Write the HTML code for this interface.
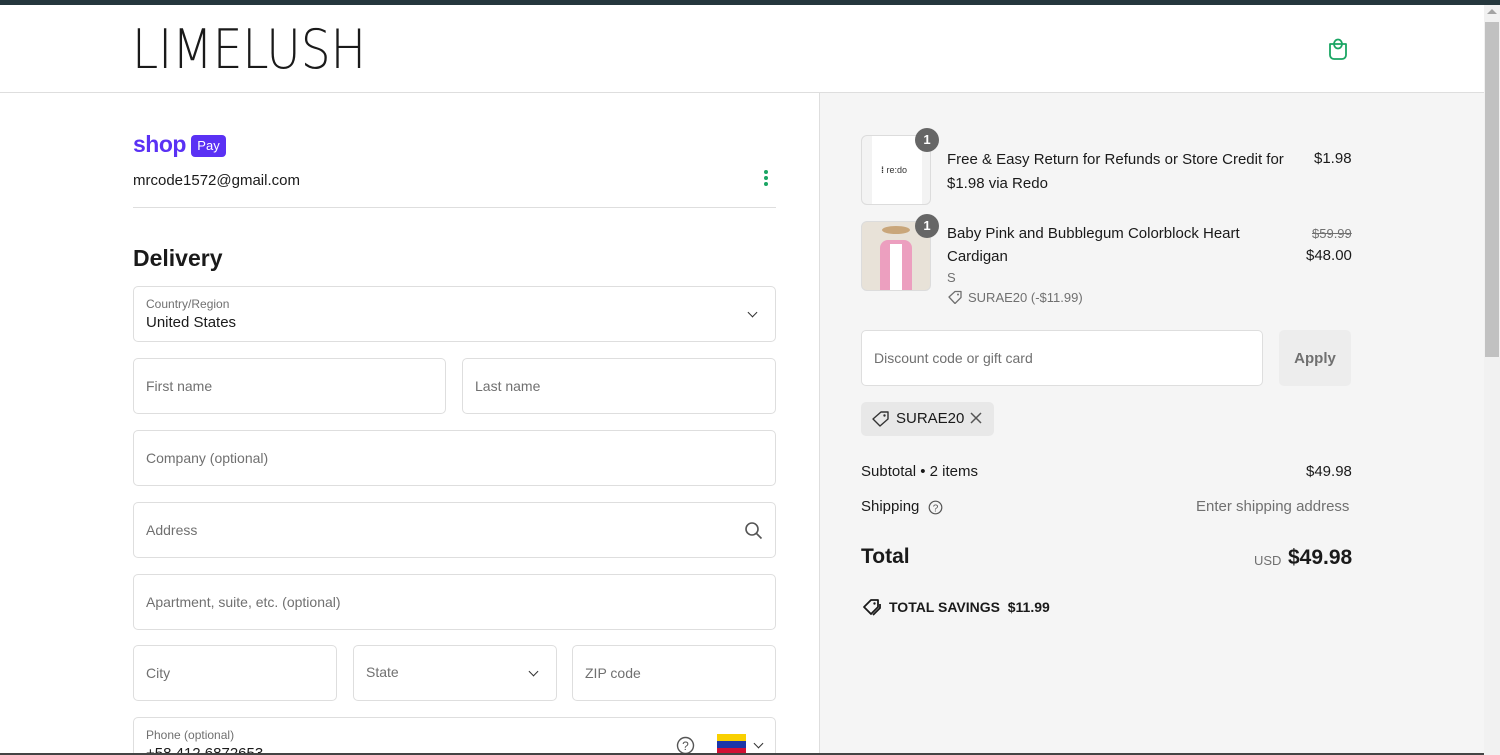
<!DOCTYPE html>
<html style="overflow:hidden;height:755px"><head><style>
*{box-sizing:border-box;margin:0;padding:0}
body{width:1500px;height:755px;overflow:hidden;background:#fff;font-family:"Liberation Sans",sans-serif;color:#1a1a1a;position:relative;font-size:14px}
.a{position:absolute}
.topbar{left:0;top:0;width:1500px;height:5px;background:#25373d}
.hdr{left:0;top:5px;width:1484px;height:88px;border-bottom:1px solid #dedede;background:#fff}
.right{left:819px;top:93px;width:665px;height:662px;background:#f5f5f5;border-left:1px solid #dedede}
.sb{left:1484px;top:5px;width:16px;height:750px;background:#f1f1f1}
.thumb{left:1485px;top:22px;width:14px;height:335px;background:#c1c1c1}
.field{position:absolute;border:1px solid #dedede;border-radius:5px;background:#fff;height:56px}
.ph{position:absolute;left:12px;top:19px;color:#707070;font-size:14px}
.lbl{position:absolute;left:12px;top:10px;font-size:12px;color:#707070}
.val{position:absolute;left:12px;top:27px;font-size:15px;color:#1a1a1a}
.chev{position:absolute;width:7px;height:7px;border-right:1.5px solid #333;border-bottom:1.5px solid #333;transform:rotate(45deg)}
.thumbimg{position:absolute;width:70px;height:70px;border:1px solid #dcdcdc;border-radius:6px;background:#fff;overflow:hidden}
.badge{position:absolute;width:24px;height:24px;border-radius:12px;background:#666;color:#fff;font-size:13px;font-weight:bold;text-align:center;line-height:24px}
</style></head><body>
<div class="a topbar"></div>
<div class="a hdr"></div>
<svg class="a" style="left:131px;top:26px" width="240" height="46" viewBox="0 0 240 46"><text x="1" y="42" font-size="54" textLength="234" lengthAdjust="spacingAndGlyphs" font-family="DejaVu Sans" font-weight="200" fill="#1a1a1a">LIMELUSH</text></svg>
<svg class="a" style="left:1327px;top:36px" width="22" height="25" viewBox="0 0 22 25"><path d="M3 8h16v11a4 4 0 0 1-4 4H7a4 4 0 0 1-4-4z" fill="none" stroke="#1aa563" stroke-width="1.8" stroke-linejoin="round"/><ellipse cx="11" cy="8" rx="4" ry="4.5" fill="none" stroke="#1aa563" stroke-width="1.8"/></svg>
<div class="a right"></div>
<div class="a sb"></div><div class="a thumb"></div>
<div class="a" style="left:1487px;top:9px;width:0;height:0;border-left:5px solid transparent;border-right:5px solid transparent;border-bottom:5px solid #a3a3a3"></div>

<div class="a" style="left:133px;top:131px;font-size:23px;font-weight:bold;color:#5a31f4;letter-spacing:-0.5px">shop</div>
<div class="a" style="left:191px;top:135px;width:35px;height:22px;background:#5a31f4;border-radius:4px;color:#fff;font-size:13px;text-align:center;line-height:22px">Pay</div>
<div class="a" style="left:133px;top:172px;font-size:15px">mrcode1572@gmail.com</div>
<div class="a" style="left:764px;top:170px;width:4px;height:4px;border-radius:2px;background:#1aa563;box-shadow:0 6px 0 #1aa563,0 12px 0 #1aa563"></div>
<div class="a" style="left:133px;top:207px;width:643px;height:1px;background:#dedede"></div>
<div class="a" style="left:133px;top:245px;font-size:23px;font-weight:bold">Delivery</div>

<div class="field" style="left:133px;top:286px;width:643px"><div class="lbl">Country/Region</div><div class="val">United States</div><div class="chev" style="left:615px;top:22px"></div></div>
<div class="field" style="left:133px;top:358px;width:313px"><div class="ph">First name</div></div>
<div class="field" style="left:462px;top:358px;width:314px"><div class="ph">Last name</div></div>
<div class="field" style="left:133px;top:430px;width:643px"><div class="ph">Company (optional)</div></div>
<div class="field" style="left:133px;top:502px;width:643px"><div class="ph">Address</div>
<svg style="position:absolute;left:610px;top:18px" width="20" height="20" viewBox="0 0 20 20"><circle cx="8" cy="8" r="6" fill="none" stroke="#555" stroke-width="1.6"/><path d="M12.5 12.5l5 5" stroke="#555" stroke-width="1.6"/></svg></div>
<div class="field" style="left:133px;top:574px;width:643px"><div class="ph">Apartment, suite, etc. (optional)</div></div>
<div class="field" style="left:133px;top:645px;width:204px"><div class="ph">City</div></div>
<div class="field" style="left:353px;top:645px;width:204px"><div class="ph" style="top:18px">State</div><div class="chev" style="left:176px;top:22px"></div></div>
<div class="field" style="left:572px;top:645px;width:204px"><div class="ph">ZIP code</div></div>
<div class="field" style="left:133px;top:717px;width:643px;height:60px"><div class="lbl">Phone (optional)</div><div class="val">+58 412 6872653</div>
<svg style="position:absolute;left:542px;top:18px" width="19" height="19" viewBox="0 0 19 19"><circle cx="9.5" cy="9.5" r="8" fill="none" stroke="#555" stroke-width="1.4"/><text x="9.5" y="14" font-size="12" text-anchor="middle" fill="#555" font-family="Liberation Sans">?</text></svg>
<div style="position:absolute;left:583px;top:16px;width:29px;height:22px"><div style="height:7px;background:#f9d000"></div><div style="height:7px;background:#1c36a8"></div><div style="height:8px;background:#d21034"></div></div>
<div class="chev" style="left:621px;top:22px"></div></div>
<div class="a" style="left:0;top:753px;width:1484px;height:2px;background:#444"></div>

<div class="thumbimg" style="left:861px;top:135px;background:#f3f3f3"><div style="position:absolute;left:10px;top:0;width:50px;height:70px;background:#fff"></div><div style="position:absolute;left:19px;top:29px;font-size:9px;color:#333"><b>⁞</b> re:do</div></div>
<div class="badge" style="left:915px;top:128px">1</div>
<div class="a" style="left:947px;top:148px;font-size:15px;line-height:24px;width:350px">Free &amp; Easy Return for Refunds or Store Credit for $1.98 via Redo</div>
<div class="a" style="left:1314px;top:150px;font-size:15px;line-height:18px">$1.98</div>

<div class="thumbimg" style="left:861px;top:221px;background:#e8e2d8"><div style="position:absolute;left:18px;top:18px;width:32px;height:52px;background:#ec9fbf;border-radius:8px 8px 0 0"></div><div style="position:absolute;left:28px;top:22px;width:12px;height:48px;background:#fff"></div><div style="position:absolute;left:20px;top:4px;width:28px;height:8px;background:#c9a67a;border-radius:50%"></div></div>
<div class="badge" style="left:915px;top:214px">1</div>
<div class="a" style="left:947px;top:222px;font-size:15px;line-height:23px;width:320px">Baby Pink and Bubblegum Colorblock Heart Cardigan</div>
<div class="a" style="left:947px;top:270px;font-size:13px;color:#707070">S</div>
<svg class="a" style="left:947px;top:290px" width="16" height="14" viewBox="0 0 16 14"><path d="M2 7l6-5.5h6v6l-6 6z" fill="none" stroke="#707070" stroke-width="1.3" stroke-linejoin="round"/><circle cx="11" cy="4.5" r="1" fill="#707070"/></svg>
<div class="a" style="left:968px;top:290px;font-size:13px;color:#707070">SURAE20 (-$11.99)</div>
<div class="a" style="left:1312px;top:226px;font-size:13px;color:#707070;text-decoration:line-through">$59.99</div>
<div class="a" style="left:1306px;top:247px;font-size:15px">$48.00</div>

<div class="a" style="left:861px;top:330px;width:402px;height:56px;background:#fff;border:1px solid #dedede;border-radius:5px"><div class="ph">Discount code or gift card</div></div>
<div class="a" style="left:1279px;top:330px;width:72px;height:56px;background:#ededed;border-radius:5px;color:#707070;font-weight:bold;font-size:15px;text-align:center;line-height:58px">Apply</div>

<div class="a" style="left:861px;top:402px;width:133px;height:34px;background:#e8e8e8;border-radius:5px"></div>
<svg class="a" style="left:871px;top:410px" width="20" height="18" viewBox="0 0 20 18"><path d="M2 9l8-7h7v7l-8 7z" fill="none" stroke="#333" stroke-width="1.4" stroke-linejoin="round"/><circle cx="13.5" cy="5.5" r="1.2" fill="#333"/></svg>
<div class="a" style="left:896px;top:410px;font-size:15px">SURAE20</div>
<svg class="a" style="left:970px;top:412px" width="12" height="12" viewBox="0 0 12 12"><path d="M1 1l10 10M11 1L1 11" stroke="#555" stroke-width="1.5"/></svg>

<div class="a" style="left:861px;top:463px;font-size:15px">Subtotal • 2 items</div>
<div class="a" style="left:1306px;top:463px;font-size:15px">$49.98</div>
<div class="a" style="left:861px;top:498px;font-size:15px">Shipping</div>
<svg class="a" style="left:928px;top:500px" width="15" height="15" viewBox="0 0 15 15"><circle cx="7.5" cy="7.5" r="6.3" fill="none" stroke="#555" stroke-width="1.2"/><text x="7.5" y="11.3" font-size="10" text-anchor="middle" fill="#555" font-family="Liberation Sans">?</text></svg>
<div class="a" style="left:1196px;top:498px;font-size:15px;color:#707070">Enter shipping address</div>
<div class="a" style="left:861px;top:545px;font-size:21px;font-weight:bold">Total</div>
<div class="a" style="left:1254px;top:553px;font-size:13px;color:#707070">USD</div>
<div class="a" style="left:1288px;top:546px;font-size:21px;font-weight:bold">$49.98</div>
<svg class="a" style="left:862px;top:598px" width="20" height="18" viewBox="0 0 20 18"><path d="M2 9l7-7h7v7l-7 7z" fill="none" stroke="#1a1a1a" stroke-width="1.8" stroke-linejoin="round"/><path d="M18 6v4l-7 7" fill="none" stroke="#1a1a1a" stroke-width="1.8"/><circle cx="12.5" cy="5.5" r="1.2" fill="#1a1a1a"/></svg>
<div class="a" style="left:889px;top:599px;font-size:14px;font-weight:bold">TOTAL SAVINGS&nbsp; $11.99</div>
</body></html>
